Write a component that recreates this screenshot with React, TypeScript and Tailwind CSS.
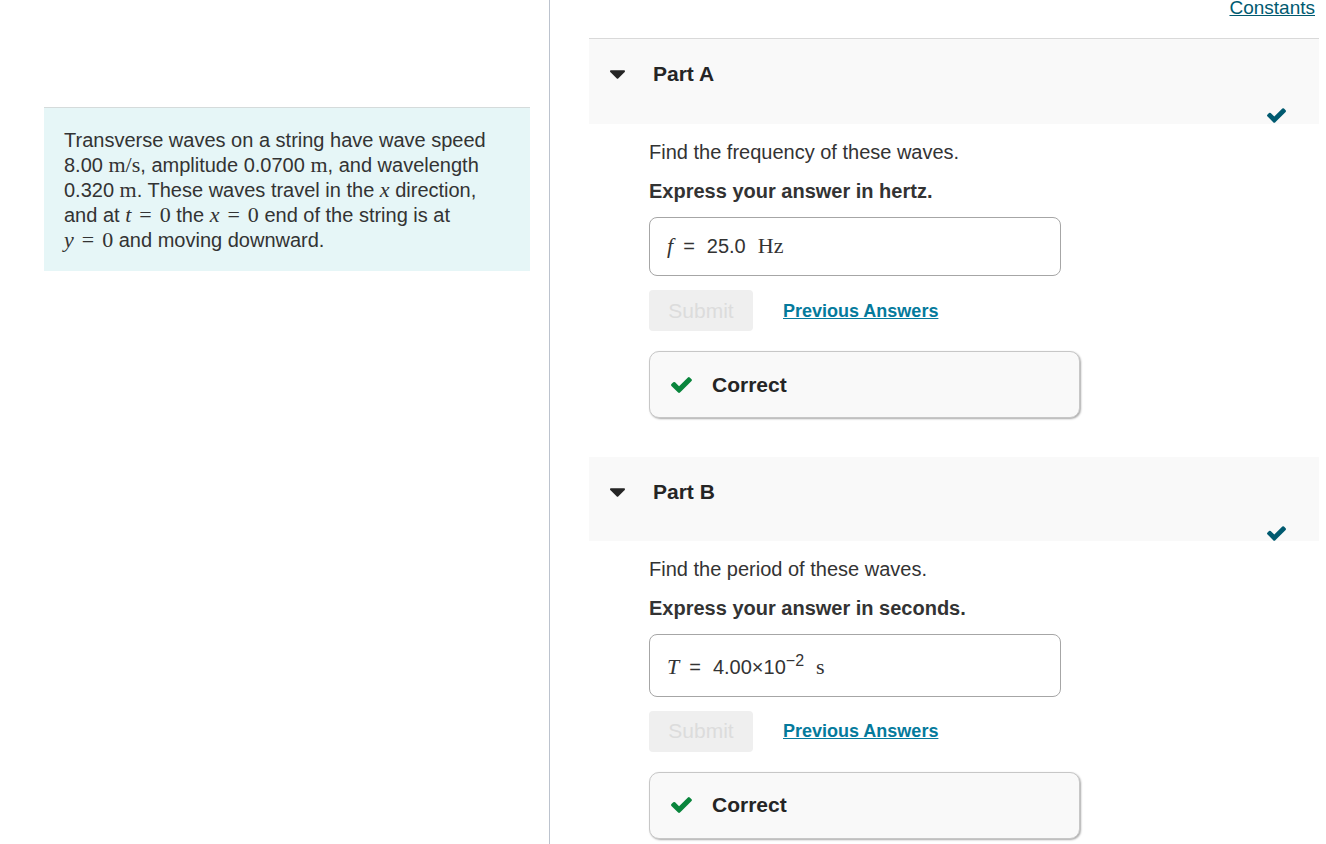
import { ReactNode, useState } from 'react';

interface PartProps {
  id: string;
  title: string;
  question: string;
  instruction: string;
  variable: string;
  unit: string;
  bordered?: boolean;
  children: ReactNode;
}

function CheckIcon({ className }: { className: string }) {
  return (
    <svg viewBox="121 334 1550 1188" fill="currentColor" className={className} aria-hidden="true">
      <path d="M1671 566q0 40-28 68l-724 724-136 136q-28 28-68 28t-68-28l-136-136-362-362q-28-28-28-68t28-68l136-136q28-28 68-28t68 28l294 295 656-657q28-28 68-28t68 28l136 136q28 28 28 68z" />
    </svg>
  );
}

function CaretIcon({ open }: { open: boolean }) {
  return (
    <svg
      viewBox="384 640 1024 576"
      fill="currentColor"
      className={open ? 'h-[9px] w-[15px]' : 'h-[9px] w-[15px] -rotate-90'}
      aria-hidden="true"
    >
      <path d="M1408 704q0 26-19 45l-448 448q-19 19-45 19t-45-19l-448-448q-19-19-19-45t19-45 45-19h896q26 0 45 19t19 45z" />
    </svg>
  );
}

// Inline math set in a serif face
function M({ children, italic }: { children: ReactNode; italic?: boolean }) {
  return (
    <span
      className={
        italic
          ? "font-['Liberation_Serif',serif] text-[22px] leading-none italic"
          : "font-['Liberation_Serif',serif] text-[22px] leading-none"
      }
    >
      {children}
    </span>
  );
}

// variable = 0
function EqualsZero({ name }: { name: string }) {
  return (
    <span className="whitespace-nowrap">
      <M italic>{name}</M>
      <span className="mx-2">
        <M>=</M>
      </span>
      <M>0</M>
    </span>
  );
}

function Part({ id, title, question, instruction, variable, unit, bordered, children }: PartProps) {
  const [open, setOpen] = useState(true);

  return (
    <section className="mb-[39px]">
      <header
        className={
          bordered
            ? 'flex flex-col border-t border-[#d9d9d9] bg-[#f9f9f9] pt-[21px] pr-[33px] pb-px pl-[21px]'
            : 'flex flex-col bg-[#f9f9f9] pt-[21px] pr-[33px] pl-[21px]'
        }
      >
        <h2>
          <button
            type="button"
            aria-expanded={open}
            onClick={() => setOpen(!open)}
            className="flex items-center gap-7 text-[21px] leading-7 font-bold text-[#252525]"
          >
            <CaretIcon open={open} />
            {title}
          </button>
        </h2>
        <CheckIcon className="mt-5 h-[15px] w-[19px] self-end text-[#005a70]" />
      </header>

      {open && (
        <div className="pt-4 pl-[60px]">
          <p className="text-[20px] leading-6">{question}</p>
          <p className="mt-[15px] text-[20px] leading-6 font-bold">{instruction}</p>

          <div className="mt-3.5 flex max-w-[412px] items-baseline rounded-lg border border-[#a6a6a6] px-[17px] pt-3.5 pb-[13px] leading-[29px]">
            <label htmlFor={id} className="flex items-baseline gap-2.5">
              <M italic>{variable}</M>
              <span className="text-[20px]">=</span>
            </label>
            <output id={id} className="ml-3 text-[20px]">
              {children}
            </output>
            <span className="ml-3">
              <M>{unit}</M>
            </span>
          </div>

          <div className="mt-3.5 flex items-center gap-[30px]">
            <button
              type="button"
              disabled
              className="h-[41px] w-[104px] rounded bg-[#efefef] text-[21px] text-[#dcdcdc]"
            >
              Submit
            </button>
            <a href="#" className="text-[18px] leading-6 font-bold text-[#047a9c] underline">
              Previous Answers
            </a>
          </div>

          <div className="mt-5 flex h-[67px] max-w-[431px] items-center gap-5 rounded-[10px] border border-[#c7c7c7] bg-[#f9f9f9] px-[21px] shadow-[1px_1px_2px_#aaa]">
            <CheckIcon className="h-4 w-[21px] text-[#09853c]" />
            <strong className="text-[21px] leading-7 text-[#252525]">Correct</strong>
          </div>
        </div>
      )}
    </section>
  );
}

export default function App() {
  return (
    <div className="flex h-screen overflow-hidden bg-white font-['Liberation_Sans',Arial,sans-serif] text-[#333]">
      <aside className="w-[550px] shrink-0 border-r border-[#bcc3ce] pt-[107px] pr-[19px] pl-11">
        <div className="border-t border-[#d5dbdb] bg-[#e6f6f7] pt-5 pr-8 pb-[18px] pl-5 text-[20px] leading-[25px]">
          Transverse waves on a string have wave speed{' '}
          <span className="whitespace-nowrap">
            8.00 <M>m/s</M>
          </span>
          , amplitude{' '}
          <span className="whitespace-nowrap">
            0.0700 <M>m</M>
          </span>
          , and wavelength{' '}
          <span className="whitespace-nowrap">
            0.320 <M>m</M>
          </span>
          . These waves travel in the <M italic>x</M> direction, and at <EqualsZero name="t" /> the{' '}
          <EqualsZero name="x" /> end of the string is at <EqualsZero name="y" /> and moving downward.
        </div>
      </aside>

      <main className="min-w-0 grow overflow-hidden pr-[7px] pl-[39px]">
        <div className="flex h-[38px] justify-end pr-1">
          <a href="#" className="-mt-1 text-[19px] leading-6 text-[#005a70] underline">
            Constants
          </a>
        </div>

        <Part
          id="frequency"
          title="Part A"
          question="Find the frequency of these waves."
          instruction="Express your answer in hertz."
          variable="f"
          unit="Hz"
          bordered
        >
          25.0
        </Part>

        <Part
          id="period"
          title="Part B"
          question="Find the period of these waves."
          instruction="Express your answer in seconds."
          variable="T"
          unit="s"
        >
          4.00×10<sup className="static align-super text-base leading-[23px]">−2</sup>
        </Part>
      </main>
    </div>
  );
}
